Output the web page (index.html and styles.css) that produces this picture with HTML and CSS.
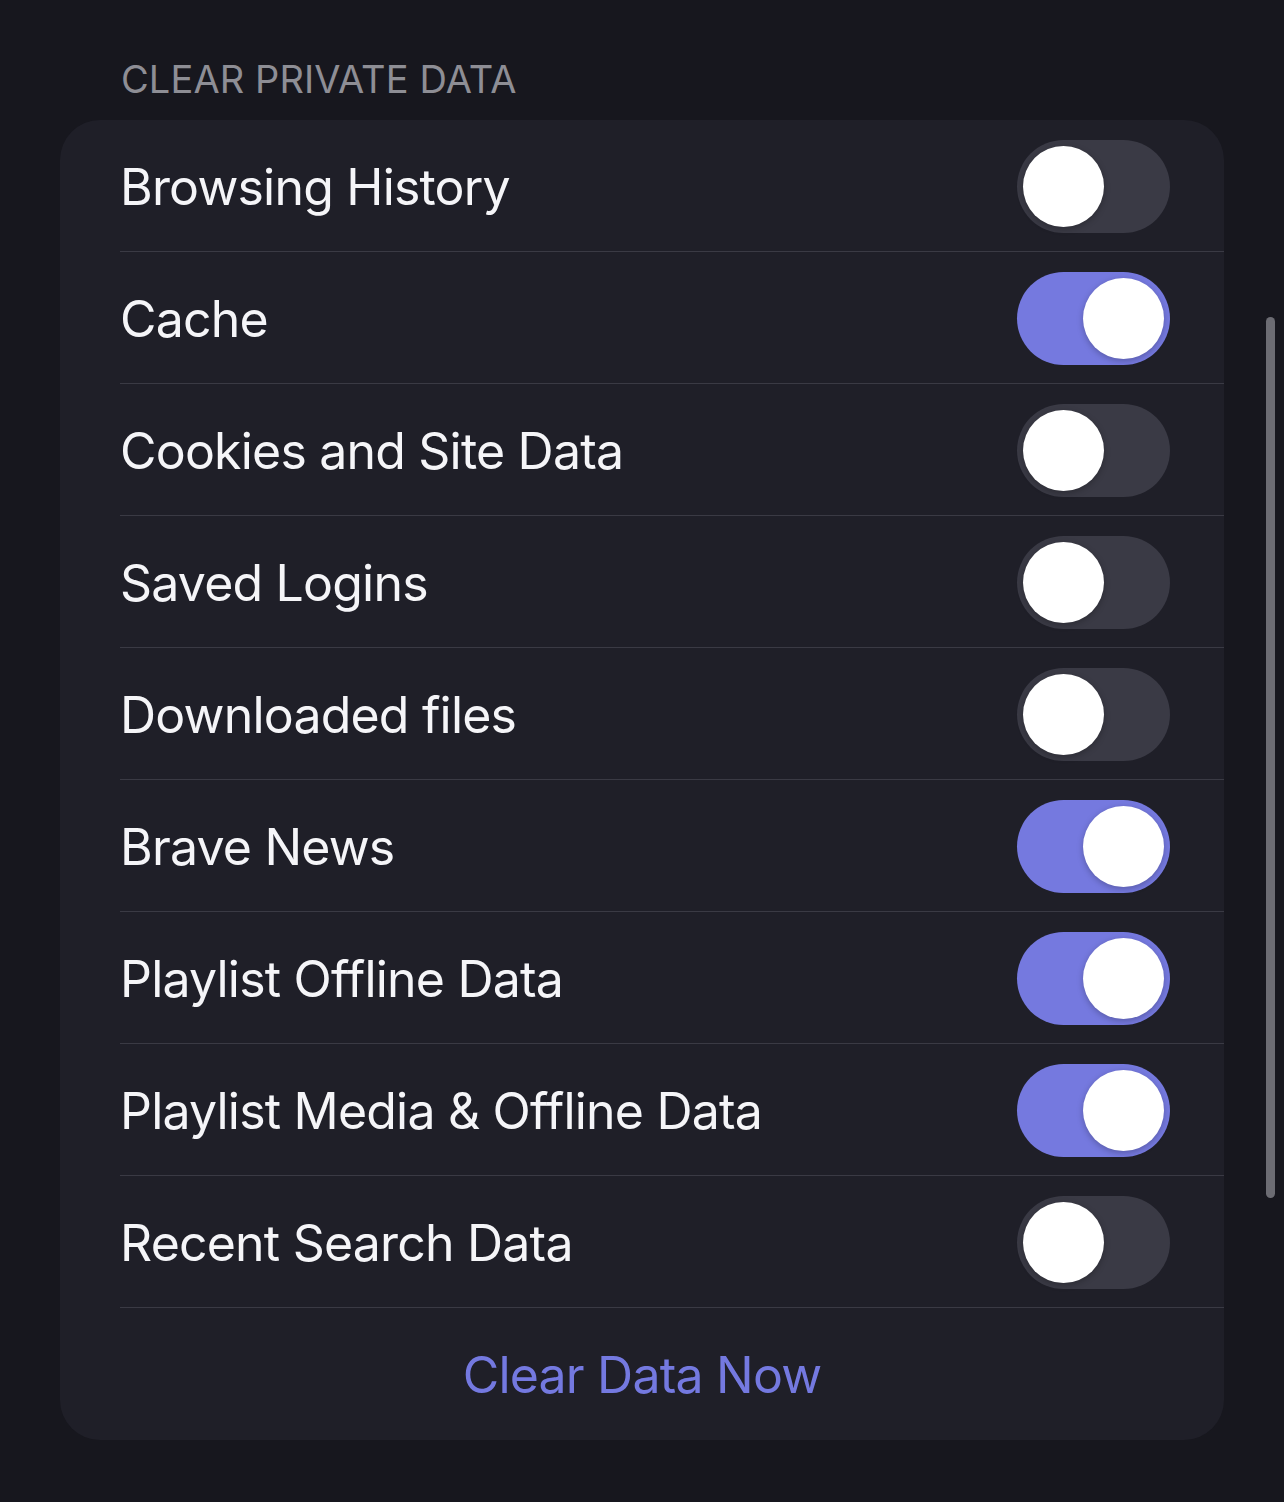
FILE: index.html
```html
<!DOCTYPE html>
<html lang="en">
<head>
<meta charset="utf-8">
<title>Clear Private Data</title>
<link rel="stylesheet" href="styles.css">
</head>
<body>
<div class="page">
  <div class="section-header">CLEAR PRIVATE DATA</div>
  <div class="card">
    <div class="row"><span class="label">Browsing History</span><span class="toggle"><span class="knob"></span></span></div>
    <div class="row"><span class="label">Cache</span><span class="toggle on"><span class="knob"></span></span></div>
    <div class="row"><span class="label">Cookies and Site Data</span><span class="toggle"><span class="knob"></span></span></div>
    <div class="row"><span class="label">Saved Logins</span><span class="toggle"><span class="knob"></span></span></div>
    <div class="row"><span class="label">Downloaded files</span><span class="toggle"><span class="knob"></span></span></div>
    <div class="row"><span class="label">Brave News</span><span class="toggle on"><span class="knob"></span></span></div>
    <div class="row"><span class="label">Playlist Offline Data</span><span class="toggle on"><span class="knob"></span></span></div>
    <div class="row"><span class="label">Playlist Media &amp; Offline Data</span><span class="toggle on"><span class="knob"></span></span></div>
    <div class="row"><span class="label">Recent Search Data</span><span class="toggle"><span class="knob"></span></span></div>
    <div class="action">Clear Data Now</div>
  </div>
  <div class="scrollbar"></div>
</div>
</body>
</html>
```
FILE: styles.css
```css
html, body {
  margin: 0;
  padding: 0;
  background: #17171e;
}
body {
  font-family: Inter, "Noto Sans", sans-serif;
  width: 1284px;
  height: 1502px;
  overflow: hidden;
}
.page {
  position: relative;
  padding-top: 56px;
  height: 1502px;
  box-sizing: border-box;
}
.section-header {
  padding-left: 121px;
  height: 64px;
  font-size: 38px;
  line-height: 46px;
  color: #8e8e95;
  letter-spacing: 0.1px;
}
.card {
  margin-left: 60px;
  width: 1164px;
  background: #1f1f28;
  border-radius: 40px;
  padding-left: 60px;
  box-sizing: border-box;
}
.row {
  display: flex;
  align-items: center;
  justify-content: space-between;
  height: 132px;
  box-sizing: border-box;
  border-bottom: 1px solid #3a3a44;
  padding-right: 54px;
  padding-top: 2px;
}
.label {
  font-size: 50px;
  color: #f5f5f8;
  letter-spacing: -0.8px;
}
.toggle {
  position: relative;
  width: 153px;
  height: 93px;
  border-radius: 47px;
  background: #3a3a45;
  box-sizing: border-box;
}
.toggle.on {
  background: #7579df;
}
.knob {
  position: absolute;
  top: 6px;
  left: 6px;
  width: 81px;
  height: 81px;
  border-radius: 50%;
  background: #ffffff;
  box-shadow: 0 2px 6px rgba(0, 0, 0, 0.25);
}
.toggle.on .knob {
  left: 66px;
}
.action {
  height: 132px;
  display: flex;
  align-items: center;
  justify-content: center;
  margin-left: -60px;
  padding-top: 2px;
  box-sizing: border-box;
  font-size: 50px;
  letter-spacing: -0.8px;
  color: #7479e0;
}
.scrollbar {
  position: absolute;
  left: 1266px;
  top: 317px;
  width: 9px;
  height: 881px;
  border-radius: 5px;
  background: #6c6c73;
}
```
